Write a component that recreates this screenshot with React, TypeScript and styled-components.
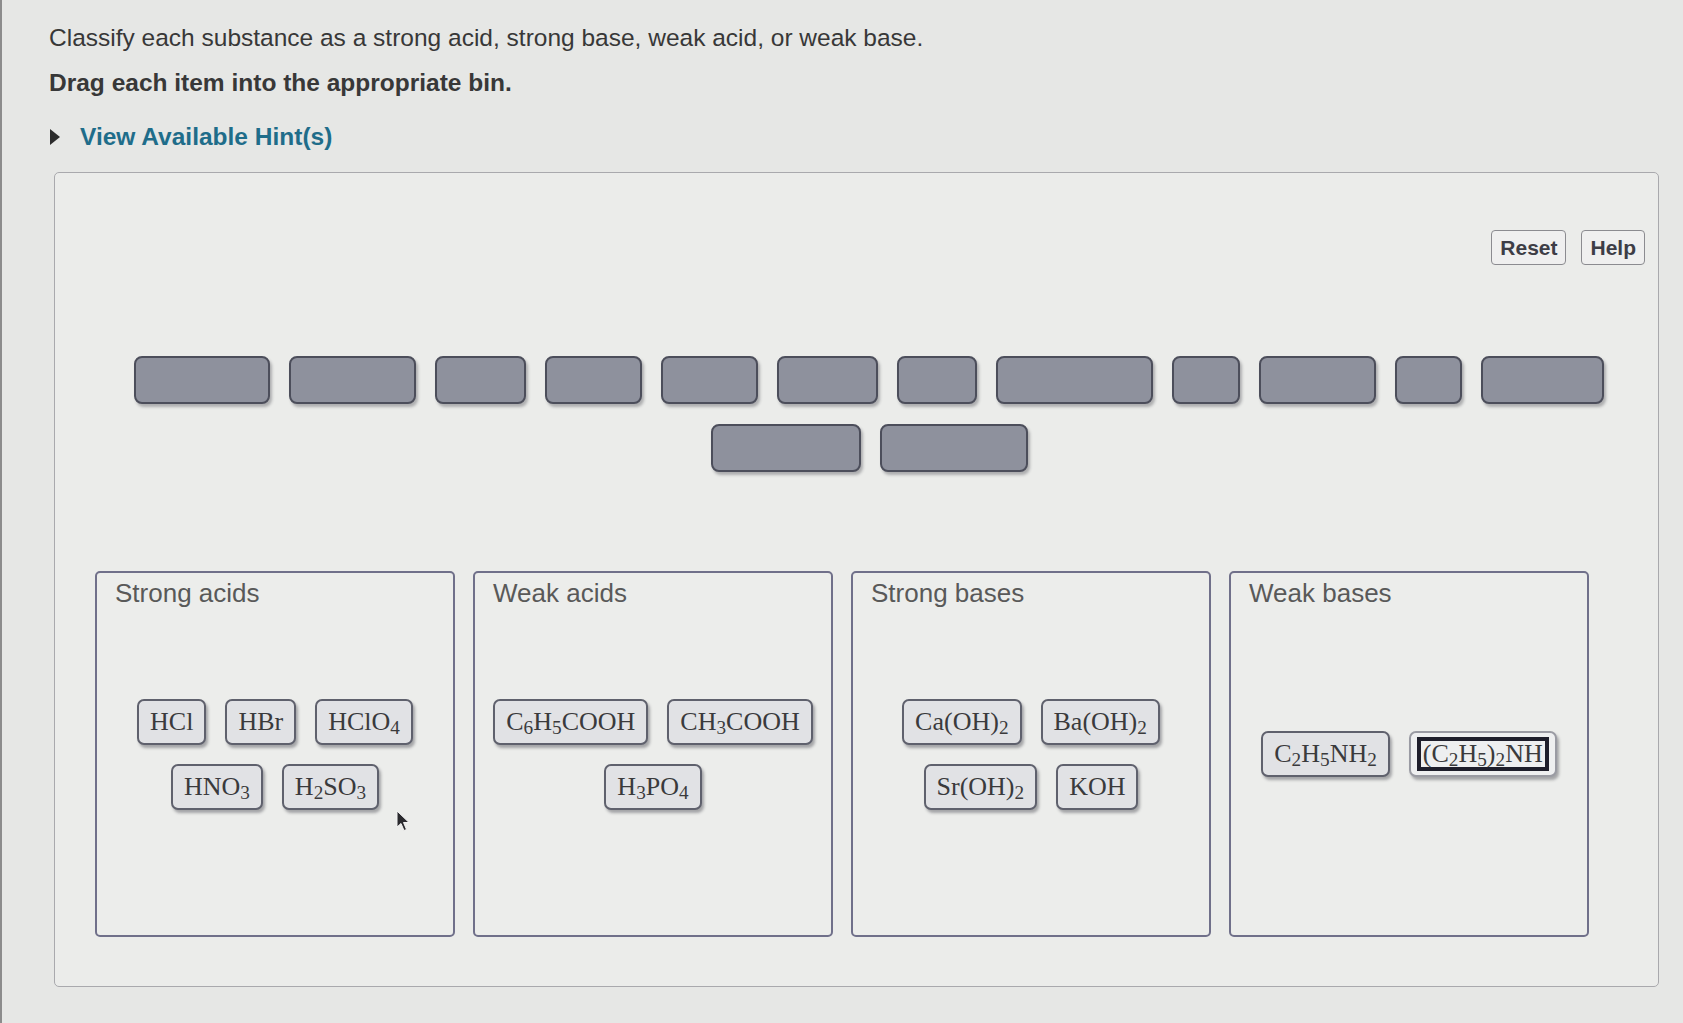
import React from "react";
import styled, { createGlobalStyle } from "styled-components";

const GlobalStyle = createGlobalStyle`
  html, body {
    margin: 0;
    padding: 0;
    background: #e6e7e5;
  }
  body {
    font-family: "Liberation Sans", Arial, sans-serif;
    color: #3a3a3a;
  }
`;

const Page = styled.div`
  min-height: 1023px;
  box-sizing: border-box;
  padding: 23px 0 0 47px;
  border-left: 2px solid #8c8c8c;
`;

const Prompt = styled.p<{ $bold?: boolean }>`
  margin: 0 0 15px;
  font-size: 24.5px;
  line-height: 30px;
  font-weight: ${(p) => (p.$bold ? 700 : 400)};
  color: #383838;
`;

const HintToggle = styled.div`
  display: flex;
  align-items: center;
  gap: 20px;
  margin-top: 24px;
  height: 30px;
  font-size: 24.5px;
  font-weight: 700;
  color: #1f6d8a;
`;

const Caret = styled.span`
  width: 0;
  height: 0;
  margin-left: 1px;
  border-top: 8px solid transparent;
  border-bottom: 8px solid transparent;
  border-left: 10px solid #2c2c2c;
`;

const Panel = styled.section`
  margin: 20px 0 0 5px;
  width: 1605px;
  height: 815px;
  box-sizing: border-box;
  background: #ebecea;
  border: 1.5px solid #a9a9ad;
  border-radius: 5px;
  padding: 57px 13px 0 0;
`;

const Toolbar = styled.div`
  display: flex;
  justify-content: flex-end;
  gap: 15px;
`;

const ToolButton = styled.button`
  height: 35px;
  padding: 0 8px;
  background: #efefef;
  border: 1.5px solid #8b8b90;
  border-radius: 4px;
  font-family: "Liberation Sans", Arial, sans-serif;
  font-size: 21px;
  font-weight: 700;
  color: #3d3d46;
`;

const TileTray = styled.div`
  width: 1480px;
  margin: 91px 0 0 74px;
  display: flex;
  flex-wrap: wrap;
  justify-content: center;
  gap: 20px 19px;
`;

const Tile = styled.div<{ $w: number }>`
  width: ${(p) => p.$w}px;
  height: 48px;
  box-sizing: border-box;
  background: #8e919d;
  border: 2px solid #4c4e5b;
  border-radius: 8px;
  box-shadow: 2px 3px 3px rgba(30, 30, 40, 0.3);
`;

const BinRow = styled.div`
  display: grid;
  grid-template-columns: repeat(4, 360px);
  gap: 18px;
  margin: 99px 0 0 40px;
`;

const Bin = styled.div`
  position: relative;
  height: 366px;
  box-sizing: border-box;
  background: #ecedeb;
  border: 2px solid #70708a;
  border-radius: 5px;
  display: flex;
  flex-direction: column;
  padding-bottom: 36px;
`;

const BinLabel = styled.div`
  padding: 5px 18px 0;
  font-size: 26px;
  line-height: 31px;
  color: #595959;
`;

const BinBody = styled.div`
  flex: 1;
  display: flex;
  flex-direction: column;
  justify-content: center;
  gap: 19px;
`;

const ChipRow = styled.div`
  display: flex;
  justify-content: center;
  gap: 19px;
`;

const Chip = styled.div<{ $focused?: boolean }>`
  height: 46px;
  box-sizing: border-box;
  display: flex;
  align-items: center;
  padding: 0 ${(p) => (p.$focused ? 6 : 11)}px;
  background: ${(p) => (p.$focused ? "#eeeff0" : "#e1e2e5")};
  border: 2px solid ${(p) => (p.$focused ? "#9a9ba3" : "#5f616d")};
  border-radius: 7px;
  box-shadow: 2px 3px 3px rgba(30, 30, 40, 0.35);
  font-family: "Liberation Serif", "DejaVu Serif", serif;
  font-size: 26px;
  color: #3a3a3c;
  white-space: nowrap;
`;

const FocusRing = styled.span`
  display: inline-flex;
  align-items: center;
  height: 34px;
  padding: 0 2px;
  box-sizing: border-box;
  border: 4px solid #1e1e2b;
`;

const Sub = styled.span`
  display: inline-block;
  font-size: 0.74em;
  transform: translateY(0.3em);
`;

const Pointer = styled.svg`
  position: absolute;
  left: 299px;
  top: 237px;
`;

type Part = string | [string];
type Formula = { parts: Part[]; focused?: boolean };

const f = (...parts: Part[]): Formula => ({ parts });

const bins: { label: string; rows: Formula[][]; pointer?: boolean }[] = [
  {
    label: "Strong acids",
    rows: [
      [f("HCl"), f("HBr"), f("HClO", ["4"])],
      [f("HNO", ["3"]), f("H", ["2"], "SO", ["3"])],
    ],
    pointer: true,
  },
  {
    label: "Weak acids",
    rows: [
      [f("C", ["6"], "H", ["5"], "COOH"), f("CH", ["3"], "COOH")],
      [f("H", ["3"], "PO", ["4"])],
    ],
  },
  {
    label: "Strong bases",
    rows: [
      [f("Ca(OH)", ["2"]), f("Ba(OH)", ["2"])],
      [f("Sr(OH)", ["2"]), f("KOH")],
    ],
  },
  {
    label: "Weak bases",
    rows: [
      [
        f("C", ["2"], "H", ["5"], "NH", ["2"]),
        { parts: ["(C", ["2"], "H", ["5"], ")", ["2"], "NH"], focused: true },
      ],
    ],
  },
];

// widths of the emptied start slots, in the order the items were listed
const tileWidths = [136, 127, 91, 97, 97, 101, 80, 157, 68, 117, 67, 123, 150, 148];

const FormulaText = ({ parts }: { parts: Part[] }) => (
  <>
    {parts.map((p, i) =>
      typeof p === "string" ? <span key={i}>{p}</span> : <Sub key={i}>{p[0]}</Sub>
    )}
  </>
);

const FormulaChip = ({ item }: { item: Formula }) => (
  <Chip $focused={item.focused}>
    {item.focused ? (
      <FocusRing>
        <FormulaText parts={item.parts} />
      </FocusRing>
    ) : (
      <FormulaText parts={item.parts} />
    )}
  </Chip>
);

const ArrowPointer = () => (
  <Pointer width="16" height="22" viewBox="0 0 16 22">
    <path
      d="M1 1 L1 17 L5 13.5 L8 20.5 L10.5 19.5 L7.5 12.5 L13 12.5 Z"
      fill="#2a2a2e"
      stroke="#f2f2f2"
      strokeWidth="1"
      strokeLinejoin="round"
    />
  </Pointer>
);

export default function App() {
  return (
    <>
      <GlobalStyle />
      <Page>
        <Prompt>Classify each substance as a strong acid, strong base, weak acid, or weak base.</Prompt>
        <Prompt $bold>Drag each item into the appropriate bin.</Prompt>
        <HintToggle>
          <Caret />
          View Available Hint(s)
        </HintToggle>
        <Panel>
          <Toolbar>
            <ToolButton>Reset</ToolButton>
            <ToolButton>Help</ToolButton>
          </Toolbar>
          <TileTray>
            {tileWidths.map((w, i) => (
              <Tile key={i} $w={w} />
            ))}
          </TileTray>
          <BinRow>
            {bins.map((bin) => (
              <Bin key={bin.label}>
                <BinLabel>{bin.label}</BinLabel>
                <BinBody>
                  {bin.rows.map((row, r) => (
                    <ChipRow key={r}>
                      {row.map((item, k) => (
                        <FormulaChip key={k} item={item} />
                      ))}
                    </ChipRow>
                  ))}
                </BinBody>
                {bin.pointer && <ArrowPointer />}
              </Bin>
            ))}
          </BinRow>
        </Panel>
      </Page>
    </>
  );
}
